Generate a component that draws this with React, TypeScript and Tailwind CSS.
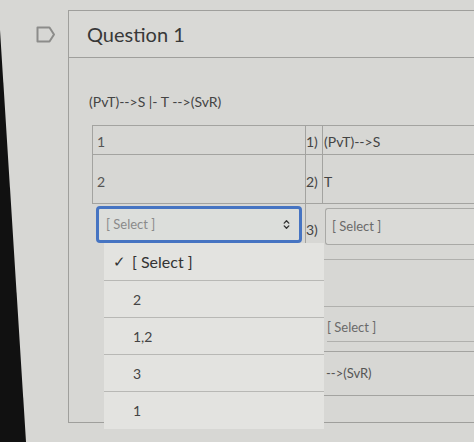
import { ChevronsUpDown } from 'lucide-react';

const LINE = 'border-[#a3a3a0]';

function Flag() {
  return (
    <svg width="20" height="17" viewBox="0 0 20 17" fill="none">
      <path d="M1.5 1.5H13.5L18 8.5L13.5 15.5H1.5Z" stroke="#8c8c8a" strokeWidth="2" strokeLinejoin="round" />
    </svg>
  );
}

const OPTIONS = ['2', '1,2', '3', '1'];

export default function App() {
  return (
    <div className="relative w-[474px] h-[442px] overflow-hidden bg-[#d7d7d4] font-['Lato','Noto_Sans',sans-serif] text-[#3b3b3b]">
      <div className="flex h-full">
        {/* gutter with flag */}
        <div className="w-[68px] shrink-0 pt-[26px] pl-[36px]">
          <Flag />
        </div>

        {/* question card */}
        <div className="flex-1 mt-[10px] h-[413px] border-l border-t border-b border-[#9f9f9c] flex flex-col">
          <div className="h-[47px] shrink-0 border-b border-[#9f9f9c] bg-[#d9d9d6] flex items-center pl-[18px] text-[20px] text-[#383838]">
            Question 1
          </div>

          <div className="pl-[20px] pt-[35px]">
            <p className="text-[14px] leading-[18px] text-[#444]">(PvT)--&gt;S |- T --&gt;(SvR)</p>

            <div className="mt-[14px] ml-[3px] text-[14px] text-[#555]">
              {/* row 1 */}
              <div className={`flex h-[30px] border-t border-b ${LINE}`}>
                <div className={`w-[214px] border-l border-r ${LINE} pl-[4px] flex items-center pt-[2px]`}>1</div>
                <div className={`w-[17px] border-r ${LINE} flex items-center pt-[2px] text-[#444]`}>1)</div>
                <div className="flex-1 flex items-center pl-[1px] pt-[2px] text-[#444]">(PvT)--&gt;S</div>
              </div>
              {/* row 2 */}
              <div className={`flex h-[49px] border-b ${LINE}`}>
                <div className={`w-[214px] border-l border-r ${LINE} pl-[4px] flex items-center pt-[4px]`}>2</div>
                <div className={`w-[17px] border-r ${LINE} flex items-center pt-[4px] text-[#444]`}>2)</div>
                <div className="flex-1 flex items-center pl-[1px] pt-[4px] text-[#444]">T</div>
              </div>
              {/* row 3 */}
              <div className="flex h-[46px]">
                <div className={`w-[214px] border-r ${LINE} pl-[4px] pr-[3px] pt-[2px]`}>
                  <div className="h-[37px] rounded-[4px] border-[3px] border-[#4674c2] bg-[#dcdedb] flex items-center justify-between pl-[7px] pr-[7px]">
                    <span className="text-[13px] text-[#8a8a8a]">[ Select ]</span>
                    <ChevronsUpDown size={11} strokeWidth={3} className="text-[#333]" />
                  </div>
                </div>
                <div className="w-[17px] flex items-center pt-[4px] text-[#444]">3)</div>
                <div className="flex-1 pl-[2px] pt-[4px]">
                  <div className="h-[37px] rounded-l-[3px] border-l border-t border-b border-[#a9a9a6] bg-[#dadad7] flex items-center pl-[6px] text-[13px] text-[#6a6a6a]">
                    [ Select ]
                  </div>
                </div>
              </div>
              {/* rows behind the menu */}
              <div className="flex h-[57px]">
                <div className="w-[231px]" />
                <div className="flex-1 pt-[9px]">
                  <div className="h-[48px] border-t border-b border-[#b0b0ad]" />
                </div>
              </div>
              <div className="flex h-[45px]">
                <div className="w-[231px]" />
                <div className={`flex-1 pl-[4px] border-b ${LINE}`}>
                  <div className="h-[35px] border-b border-[#b0b0ad] flex items-end pb-[4px] text-[13px] text-[#6a6a6a]">[ Select ]</div>
                </div>
              </div>
              <div className="flex h-[44px]">
                <div className="w-[231px]" />
                <div className={`flex-1 pl-[3px] flex items-center text-[13px] text-[#555] border-b ${LINE}`}>--&gt;(SvR)</div>
              </div>
            </div>
          </div>
        </div>
      </div>

      {/* open select menu */}
      <div className="absolute left-[104px] top-[243px] w-[220px] bg-[#e3e3e0] flex flex-col">
        <div className="h-[38px] border-b border-[#b8b8b5] flex items-center pl-[9px] gap-[6px] text-[16px] text-[#333]">
          <span className="text-[15px]">✓</span>
          <span>[ Select ]</span>
        </div>
        {OPTIONS.map((o, i) => (
          <div
            key={o}
            className={`h-[37px] flex items-center pl-[29px] text-[14px] text-[#444] ${i < OPTIONS.length - 1 ? 'border-b border-[#b8b8b5]' : ''}`}
          >
            {o}
          </div>
        ))}
      </div>

      {/* screen bezel */}
      <div className="absolute inset-0 bg-[#111] [clip-path:polygon(0_30px,26px_100%,0_100%)]" />
    </div>
  );
}
